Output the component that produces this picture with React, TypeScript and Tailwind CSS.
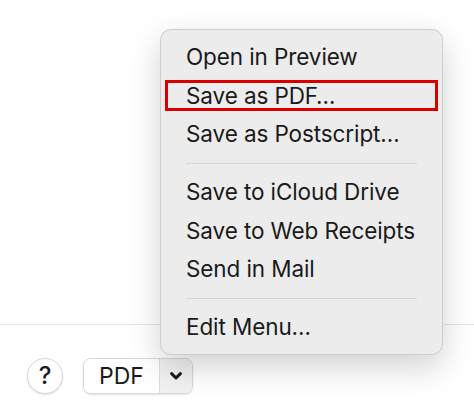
import React from "react";

const groups = [
  ["Open in Preview", "Save as PDF…", "Save as Postscript…"],
  ["Save to iCloud Drive", "Save to Web Receipts", "Send in Mail"],
  ["Edit Menu…"],
];

function Separator() {
  return (
    <div className="h-[19.5px] flex items-center px-[25px]">
      <div className="h-[1.5px] w-full bg-[#d6d6d6]" />
    </div>
  );
}

export default function App() {
  return (
    <div
      className="relative w-[474px] h-[419px] bg-white overflow-hidden text-[#1a1a1a]"
      style={{ fontFamily: "Inter, 'Liberation Sans', sans-serif" }}
    >
      {/* dialog body */}
      <div className="h-[324px]" />

      {/* bottom bar */}
      <div className="h-[95px] border-t border-[#e3e3e3] flex items-start pt-[33px] pl-[27px] gap-[20px]">
        <button className="w-[36px] h-[36px] rounded-full bg-white border border-[#d8d8d8] shadow-[0_1px_2px_rgba(0,0,0,0.12)] flex items-center justify-center text-[24px] font-medium leading-none">
          ?
        </button>
        <div className="flex h-[36px] rounded-[8px] border border-[#d8d8d8] shadow-[0_1px_2px_rgba(0,0,0,0.12)] overflow-hidden">
          <div className="w-[75px] bg-white flex items-center justify-center text-[23px] leading-none">
            PDF
          </div>
          <div className="w-[33px] bg-[#f1f1f1] border-l border-[#dcdcdc] flex items-center justify-center">
            <svg width="12" height="8" viewBox="0 0 12 8" fill="none">
              <path d="M1.6 1.6 L6 6 L10.4 1.6" stroke="#1a1a1a" strokeWidth="3" strokeLinecap="round" strokeLinejoin="round" />
            </svg>
          </div>
        </div>
      </div>

      {/* popup menu */}
      <div className="absolute left-[160px] top-[29px] w-[283px] h-[326px] rounded-[11px] bg-[#ececec] border border-[#cdcdcd] shadow-[0_12px_32px_rgba(0,0,0,0.18)] pt-[8px] pb-[8px]">
        {groups.map((items, gi) => (
          <div key={gi}>
            {gi > 0 && <Separator />}
            {items.map((label) => (
              <div key={label} className="relative h-[38.5px] flex items-center pl-[25px] text-[22.5px] leading-none tracking-[-0.1px]">
                {label}
                {label === "Save as PDF…" && (
                  <div className="absolute left-[4px] right-[4px] top-[3.5px] bottom-[4px] border-[3px] border-[#d60000]" />
                )}
              </div>
            ))}
          </div>
        ))}
      </div>
    </div>
  );
}
